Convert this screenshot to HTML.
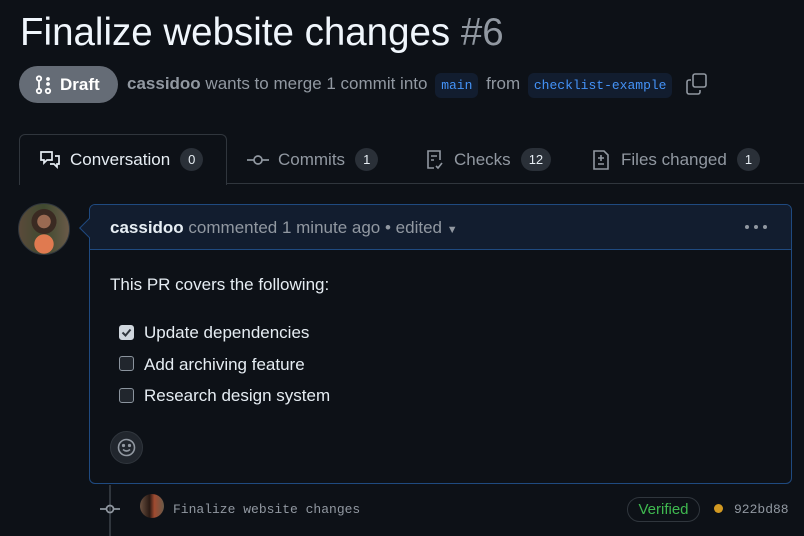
<!DOCTYPE html>
<html><head><style>
*{box-sizing:border-box;margin:0;padding:0}
body{width:804px;height:536px;overflow:hidden;background:#0d1117;color:#e6edf3;font-family:"Liberation Sans",sans-serif;position:relative}
.a{position:absolute}
.mono{font-family:"Liberation Mono",monospace}
.cnt{display:inline-block;background:#2a3038;color:#e6edf3;border-radius:12px;font-size:13px;padding:4px 8px;margin-left:10px;vertical-align:1px}
.tab{position:absolute;top:148px;font-size:17px;color:#9198a1;white-space:nowrap}
.cb{position:absolute;left:119px;width:15px;height:15px;border:1px solid #8b949e;border-radius:3px;background:#21262d}
.it{position:absolute;left:144px;font-size:17px;color:#e6edf3}
.code{background:#121d2f;color:#4493f8;font-size:13px;padding:5px 6px;border-radius:6px}
</style></head><body>
<div class="a" style="left:20px;top:11px;font-size:38.5px;color:#f0f6fc;white-space:nowrap">Finalize website changes <span style="color:#9198a1">#6</span></div>
<div class="a" style="left:19px;top:66px;width:99px;height:37px;border-radius:19px;background:#656c76;color:#fff;font-size:17px;font-weight:bold;padding:9px 0 0 16px">
<svg width="18" height="20" viewBox="0 0 18 20" style="position:absolute;left:16px;top:9px" fill="none" stroke="#fff" stroke-width="1.8"><circle cx="4" cy="3.5" r="2.2"/><circle cx="4" cy="16" r="2.2"/><line x1="4" y1="6" x2="4" y2="13.5"/><circle cx="13" cy="4" r="1" fill="#fff"/><circle cx="13" cy="9" r="1" fill="#fff"/><circle cx="13" cy="16" r="2.2"/></svg>
<span style="position:absolute;left:41px;top:9px">Draft</span></div>
<div class="a" style="left:127px;top:74px;font-size:17px;color:#9198a1;white-space:nowrap"><b style="color:#9198a1">cassidoo</b> wants to merge 1 commit into <span class="mono code" style="margin:0 3px">main</span> from <span class="mono code" style="margin-left:3px">checklist-example</span></div>
<svg class="a" style="left:686px;top:73px" width="21" height="22" viewBox="0 0 21 22" fill="none" stroke="#9198a1" stroke-width="1.6"><rect x="7" y="1" width="13" height="13" rx="2"/><path d="M5 7H3a2 2 0 0 0-2 2v10a2 2 0 0 0 2 2h9a2 2 0 0 0 2-2v-2"/></svg>

<div class="a" style="left:226px;top:183px;width:578px;height:1px;background:#30363d"></div>
<div class="a" style="left:19px;top:134px;width:208px;height:51px;border:1px solid #30363d;border-bottom:none;border-radius:6px 6px 0 0;background:#0d1117"></div>
<svg class="a" style="left:39px;top:150px" width="22" height="20" viewBox="0 0 22 20" fill="none" stroke="#e6edf3" stroke-width="1.7"><path d="M2 2h11v8H8l-3 3v-3H2z"/><path d="M16 6h4v8h-2v3l-3-3h-4"/></svg>
<div class="tab" style="left:70px;color:#e6edf3">Conversation<span class="cnt">0</span></div>
<svg class="a" style="left:247px;top:153px" width="22" height="14" viewBox="0 0 22 14" fill="none" stroke="#9198a1" stroke-width="1.7"><circle cx="11" cy="7" r="4"/><line x1="0" y1="7" x2="7" y2="7"/><line x1="15" y1="7" x2="22" y2="7"/></svg>
<div class="tab" style="left:278px">Commits<span class="cnt">1</span></div>
<svg class="a" style="left:425px;top:149px" width="20" height="22" viewBox="0 0 20 22" fill="none" stroke="#9198a1" stroke-width="1.6"><path d="M9 19H3V2h12v9"/><path d="M6 7h6M6 11h3"/><path d="M11 17l2 2 4-5"/></svg>
<div class="tab" style="left:454px">Checks<span class="cnt">12</span></div>
<svg class="a" style="left:592px;top:149px" width="18" height="22" viewBox="0 0 18 22" fill="none" stroke="#9198a1" stroke-width="1.6"><path d="M2 2h10l4 4v14H2z"/><path d="M9 6v6M6 9h6M6 15h6"/></svg>
<div class="tab" style="left:621px">Files changed<span class="cnt">1</span></div>

<div class="a" style="left:18px;top:203px;width:52px;height:52px;border-radius:50%;background:radial-gradient(circle at 50% 80%,#e07a50 0 20%,transparent 21%),radial-gradient(circle at 50% 35%,#9a6a52 0 16%,#3a2a22 17% 30%,transparent 31%),linear-gradient(90deg,#5a4a3a,#3f4a30 50%,#6a5a48);border:1px solid #30363d"></div>
<div class="a" style="left:109px;top:485px;width:2px;height:51px;background:#30363d"></div>
<div class="a" style="left:89px;top:204px;width:703px;height:280px;border:1px solid #1f4a80;border-radius:6px;background:#0d1117"></div>
<div class="a" style="left:90px;top:205px;width:701px;height:45px;background:#121d2f;border-bottom:1px solid #1f4a80;border-radius:5px 5px 0 0"></div>
<div class="a" style="left:82px;top:221px;width:14px;height:14px;background:#121d2f;border-left:1px solid #1f4a80;border-bottom:1px solid #1f4a80;transform:rotate(45deg)"></div>
<div class="a" style="left:110px;top:218px;font-size:17px;color:#9198a1;white-space:nowrap"><b style="color:#e6edf3">cassidoo</b> commented 1 minute ago • edited <span style="font-size:11px">▼</span></div>
<svg class="a" style="left:744px;top:224px" width="24" height="6" fill="#9198a1"><circle cx="3" cy="3" r="2"/><circle cx="12" cy="3" r="2"/><circle cx="21" cy="3" r="2"/></svg>
<div class="a" style="left:110px;top:275px;font-size:17px">This PR covers the following:</div>
<div class="cb" style="top:325px;background:#d0d7de;border-color:#d0d7de"><svg width="13" height="13" viewBox="0 0 13 13" fill="none" stroke="#30363d" stroke-width="2"><path d="M2.5 6.5l3 3 5-6"/></svg></div>
<div class="it" style="top:323px">Update dependencies</div>
<div class="cb" style="top:356px"></div>
<div class="it" style="top:355px">Add archiving feature</div>
<div class="cb" style="top:388px"></div>
<div class="it" style="top:386px">Research design system</div>
<div class="a" style="left:110px;top:431px;width:33px;height:33px;border-radius:50%;background:#21262d;border:1px solid #30363d"></div>
<svg class="a" style="left:115px;top:436px" width="23" height="23" viewBox="0 0 23 23" fill="none" stroke="#9198a1" stroke-width="1.6"><circle cx="11.5" cy="11.5" r="8"/><circle cx="8.5" cy="9.5" r=".8" fill="#9198a1"/><circle cx="14.5" cy="9.5" r=".8" fill="#9198a1"/><path d="M8 13.5q3.5 3 7 0"/></svg>

<svg class="a" style="left:100px;top:502px" width="20" height="14" viewBox="0 0 20 14" fill="none" stroke="#9198a1" stroke-width="1.7"><circle cx="10" cy="7" r="3.5"/><line x1="0" y1="7" x2="6" y2="7"/><line x1="14" y1="7" x2="20" y2="7"/></svg>
<div class="a" style="left:140px;top:494px;width:24px;height:24px;border-radius:50%;background:linear-gradient(90deg,#6a5040,#2a1a14 40%,#a04a30 60%,#6a5a48)"></div>
<div class="a mono" style="left:173px;top:502px;font-size:13px;color:#9198a1">Finalize website changes</div>
<div class="a" style="left:627px;top:497px;width:73px;height:25px;border:1px solid #30363d;border-radius:13px;color:#3fb950;font-size:15px;text-align:center;line-height:23px">Verified</div>
<div class="a" style="left:714px;top:504px;width:9px;height:9px;border-radius:50%;background:#d29922"></div>
<div class="a mono" style="left:734px;top:502px;font-size:13px;color:#9198a1">922bd88</div>
</body></html>
